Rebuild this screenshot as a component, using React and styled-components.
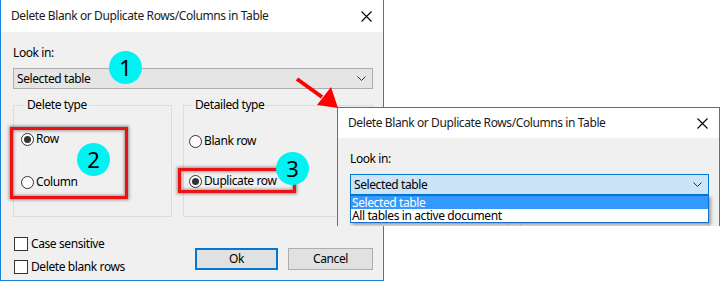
import React from "react";
import styled, { createGlobalStyle } from "styled-components";

const GlobalStyle = createGlobalStyle`
  html, body {
    margin: 0;
    padding: 0;
    background: #fff;
  }
  body {
    font-family: "Noto Sans", "Segoe UI", sans-serif;
    font-size: 12px;
    letter-spacing: -0.4px;
    color: #000;
  }
`;

const Stage = styled.div`
  position: relative;
  width: 721px;
  height: 283px;
  overflow: hidden;
  background: #fff;
`;

const Window = styled.div`
  position: absolute;
  left: ${(p) => p.$x}px;
  top: ${(p) => p.$y}px;
  width: ${(p) => p.$w}px;
  height: ${(p) => p.$h}px;
  box-sizing: border-box;
  border: 1px solid #1883d7;
  border-bottom: ${(p) => (p.$cut ? "none" : "1px solid #1883d7")};
  background: #f0f0f0;
  overflow: hidden;
  display: flex;
  flex-direction: column;
`;

const TitleBar = styled.div`
  height: ${(p) => p.$h}px;
  flex: none;
  background: #fff;
  display: flex;
  align-items: center;
  justify-content: space-between;
  padding: 0 11px 0 10px;
  line-height: 16px;
  color: #1a1a1a;
`;

const Body = styled.div`
  padding: 13px 10px 0 12px;
  display: flex;
  flex-direction: column;
`;

const Label = styled.div`
  line-height: 16px;
  height: 16px;
  white-space: nowrap;
`;

const ComboWrap = styled.div`
  position: relative;
  margin-top: 7px;
`;

const Combo = styled.div`
  height: 21px;
  box-sizing: border-box;
  border: 1px solid ${(p) => (p.$open ? "#0078d7" : "#adadad")};
  background: ${(p) => (p.$open ? "#cce4f7" : "#e5e5e5")};
  display: flex;
  align-items: center;
  justify-content: space-between;
  padding: 0 6px 0 3px;
  line-height: 16px;
`;

const DropList = styled.div`
  position: absolute;
  left: 0;
  right: 0;
  top: 100%;
  box-sizing: border-box;
  border: 1px solid #1a6fc8;
  background: #fff;
  box-shadow: 2px 2px 3px rgba(0, 0, 0, 0.35);
  z-index: 2;
`;

const DropItem = styled.div`
  height: 13px;
  line-height: 13px;
  padding: 0 1px;
  background: ${(p) => (p.$active ? "#3399ff" : "#fff")};
  color: ${(p) => (p.$active ? "#fff" : "#000")};
  white-space: nowrap;
`;

const Groups = styled.div`
  display: grid;
  grid-template-columns: 159px 1fr;
  column-gap: 11px;
  margin-top: 8px;
`;

const GroupBox = styled.fieldset`
  margin: 0;
  height: 120px;
  box-sizing: border-box;
  border: 1px solid #dcdcdc;
  padding: 0 0 0 ${(p) => p.$pad}px;
  min-width: 0;

  legend {
    padding: 0 2px;
    margin-left: 4px;
    line-height: 16px;
  }
`;

const RadioList = styled.div`
  display: flex;
  flex-direction: column;
  gap: ${(p) => p.$gap}px;
  padding-top: ${(p) => p.$top}px;
`;

const Option = styled.label`
  display: flex;
  align-items: center;
  gap: 2px;
  line-height: 16px;
  height: 16px;
  white-space: nowrap;
`;

const RadioDot = styled.span`
  width: 13px;
  height: 13px;
  box-sizing: border-box;
  border: 1px solid #333;
  border-radius: 50%;
  background: #fff;
  display: flex;
  align-items: center;
  justify-content: center;

  &::after {
    content: "";
    width: 7px;
    height: 7px;
    border-radius: 50%;
    background: ${(p) => (p.$on ? "#333" : "transparent")};
  }
`;

const CheckBox = styled.span`
  width: 14px;
  height: 14px;
  box-sizing: border-box;
  border: 1px solid #333;
  background: #fff;
  margin-right: 1px;
`;

const Footer = styled.div`
  display: flex;
  justify-content: space-between;
  align-items: flex-end;
  margin-top: 19px;
`;

const Checks = styled.div`
  display: flex;
  flex-direction: column;
  gap: 7px;
  padding-left: 1px;
`;

const Buttons = styled.div`
  display: flex;
  gap: 10px;
  margin-bottom: 5px;
`;

const Button = styled.div`
  width: ${(p) => p.$w}px;
  height: 22px;
  box-sizing: border-box;
  border: ${(p) => (p.$default ? "2px solid #0078d7" : "1px solid #adadad")};
  background: #e1e1e1;
  display: flex;
  align-items: center;
  justify-content: center;
  line-height: 16px;
`;

const RedFrame = styled.div`
  position: absolute;
  left: ${(p) => p.$x}px;
  top: ${(p) => p.$y}px;
  width: ${(p) => p.$w}px;
  height: ${(p) => p.$h}px;
  box-sizing: border-box;
  border: 3px solid #ee1111;
  box-shadow: 0 0 3px 1px rgba(0, 0, 0, 0.4), inset 0 0 3px 1px rgba(0, 0, 0, 0.35);
`;

const Badge = styled.div`
  position: absolute;
  left: ${(p) => p.$x - 16}px;
  top: ${(p) => p.$y - 16}px;
  width: 33px;
  height: 33px;
  border-radius: 50%;
  background: #00f3f3;
  color: #000;
  font-size: 22px;
  letter-spacing: 0;
  line-height: 33px;
  text-align: center;
`;

const ArrowSvg = styled.svg`
  position: absolute;
  left: 0;
  top: 0;
  pointer-events: none;
`;

const CloseIcon = () => (
  <svg width="11" height="11" viewBox="0 0 11 11">
    <path d="M0.5 0.5 L10.5 10.5 M10.5 0.5 L0.5 10.5" stroke="#000" strokeWidth="1.1" fill="none" />
  </svg>
);

const Chevron = () => (
  <svg width="9" height="5" viewBox="0 0 9 5">
    <polyline points="0.5,0.5 4.5,4.5 8.5,0.5" stroke="#333" strokeWidth="1" fill="none" />
  </svg>
);

const Dialog = ({ x, y, w, h, titleH, cut, open }) => (
  <Window $x={x} $y={y} $w={w} $h={h} $cut={cut}>
    <TitleBar $h={titleH}>
      <span>Delete Blank or Duplicate Rows/Columns in Table</span>
      <CloseIcon />
    </TitleBar>
    <Body>
      <Label>Look in:</Label>
      <ComboWrap>
        <Combo $open={open}>
          <span>Selected table</span>
          <Chevron />
        </Combo>
        {open && (
          <DropList>
            <DropItem $active>Selected table</DropItem>
            <DropItem>All tables in active document</DropItem>
          </DropList>
        )}
      </ComboWrap>
      <Groups>
        <GroupBox $pad={7}>
          <legend>Delete type</legend>
          <RadioList $top={18} $gap={27}>
            <Option><RadioDot $on />Row</Option>
            <Option><RadioDot />Column</Option>
          </RadioList>
        </GroupBox>
        <GroupBox $pad={5}>
          <legend>Detailed type</legend>
          <RadioList $top={20} $gap={24}>
            <Option><RadioDot />Blank row</Option>
            <Option><RadioDot $on />Duplicate row</Option>
          </RadioList>
        </GroupBox>
      </Groups>
      <Footer>
        <Checks>
          <Option><CheckBox />Case sensitive</Option>
          <Option><CheckBox />Delete blank rows</Option>
        </Checks>
        <Buttons>
          <Button $w={83} $default>Ok</Button>
          <Button $w={85}>Cancel</Button>
        </Buttons>
      </Footer>
    </Body>
  </Window>
);

export default function App() {
  return (
    <>
      <GlobalStyle />
      <Stage>
        <Dialog x={0} y={-1} w={384} h={282} titleH={32} />
        <Dialog x={337} y={107} w={383} h={119} titleH={30} cut open />
        <RedFrame $x={10} $y={127} $w={118} $h={72} />
        <RedFrame $x={178} $y={168} $w={118} $h={25} />
        <Badge $x={125} $y={67}>1</Badge>
        <Badge $x={93} $y={159}>2</Badge>
        <Badge $x={292} $y={168}>3</Badge>
        <ArrowSvg width="721" height="283">
          <line x1="297" y1="79" x2="322" y2="97" stroke="#f00" strokeWidth="4" />
          <polygon points="317,105 331,87 338,108" fill="#f00" />
        </ArrowSvg>
      </Stage>
    </>
  );
}
